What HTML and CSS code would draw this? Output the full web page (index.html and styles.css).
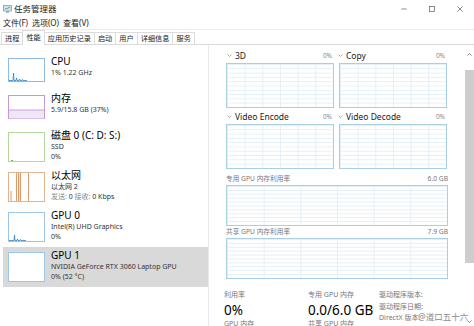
FILE: index.html
```html
<!DOCTYPE html>
<html lang="zh-CN">
<head>
<meta charset="utf-8">
<title>任务管理器</title>
<link rel="stylesheet" href="styles.css">
</head>
<body>
<div class="window">
  <header class="titlebar">
    <svg class="app-icon" viewBox="0 0 9 8" width="9" height="8">
      <rect x="0.5" y="0.5" width="8" height="5.5" fill="#d6e4f1" stroke="#7f9db9" stroke-width="0.8"/>
      <polyline points="1.5,4.5 3,3 4.5,4 6,2 7.5,3" fill="none" stroke="#3a9a3a" stroke-width="0.7"/>
      <rect x="3" y="6.3" width="3" height="1.4" fill="#7f9db9"/>
    </svg>
    <span class="title">任务管理器</span>
    <div class="controls">
      <span class="ctrl"><svg viewBox="0 0 7 7"><path d="M0.5 3.5H6.5" stroke="#555" stroke-width="0.8"/></svg></span>
      <span class="ctrl"><svg viewBox="0 0 7 7"><rect x="0.5" y="0.5" width="6" height="6" fill="none" stroke="#555" stroke-width="0.8"/></svg></span>
      <span class="ctrl"><svg viewBox="0 0 7 7"><path d="M0.5 0.5L6.5 6.5M6.5 0.5L0.5 6.5" stroke="#555" stroke-width="0.8"/></svg></span>
    </div>
  </header>

  <nav class="menubar">
    <span class="menu">文件(F)</span>
    <span class="menu">选项(O)</span>
    <span class="menu">查看(V)</span>
  </nav>

  <div class="tabs">
    <span class="tab">进程</span>
    <span class="tab active">性能</span>
    <span class="tab">应用历史记录</span>
    <span class="tab">启动</span>
    <span class="tab">用户</span>
    <span class="tab">详细信息</span>
    <span class="tab">服务</span>
  </div>

  <main class="main">
    <aside class="sidebar">
      <div class="item two">
        <svg class="thumb" width="37" height="24" viewBox="0 0 37 24">
          <rect x="0.5" y="0.5" width="36" height="23" fill="#fff" stroke="#8ebbdf"/>
          <polyline points="1,22.5 5,22.5 5.5,15 6,22.5 8,22.5 8.5,20 9,22.5 11,22.5 11.5,21 12,22.5 14,22.5 14.5,21.5 15,22.5 19,22.5" fill="none" stroke="#2a7fc0" stroke-width="0.8"/>
        </svg>
        <div class="info">
          <div class="name">CPU</div>
          <div class="sub">1% 1.22 GHz</div>
        </div>
      </div>

      <div class="item two">
        <svg class="thumb" width="37" height="24" viewBox="0 0 37 24">
          <rect x="0.5" y="0.5" width="36" height="23" fill="#fff" stroke="#c49ad4"/>
          <rect x="1" y="15" width="35" height="8.5" fill="#f1e6f5"/>
          <line x1="1" y1="15" x2="36" y2="15" stroke="#c08ad2" stroke-width="0.8"/>
        </svg>
        <div class="info">
          <div class="name">内存</div>
          <div class="sub">5.9/15.8 GB (37%)</div>
        </div>
      </div>

      <div class="item">
        <svg class="thumb" width="37" height="30" viewBox="0 0 37 30">
          <rect x="0.5" y="0.5" width="36" height="29" fill="#fff" stroke="#b4d69a"/>
          <path d="M3 28.5H5" stroke="#4da60c" stroke-width="0.8"/>
        </svg>
        <div class="info">
          <div class="name">磁盘 0 (C: D: S:)</div>
          <div class="sub">SSD</div>
          <div class="sub">0%</div>
        </div>
      </div>

      <div class="item">
        <svg class="thumb" width="37" height="30" viewBox="0 0 37 30">
          <rect x="0.5" y="0.5" width="36" height="29" fill="#fff" stroke="#e2b48e"/>
          <rect x="10" y="1" width="3" height="28" fill="#f7e4d4"/>
          <path d="M3 29V19M8.5 29V1M10.5 29V1M12.5 29V1M20.5 29V1" stroke="#d2844a" stroke-width="0.8"/>
        </svg>
        <div class="info">
          <div class="name">以太网</div>
          <div class="sub">以太网 2</div>
          <div class="sub"><span class="dim">发送:</span> 0 <span class="dim">接收:</span> 0 Kbps</div>
        </div>
      </div>

      <div class="item">
        <svg class="thumb" width="37" height="30" viewBox="0 0 37 30">
          <rect x="0.5" y="0.5" width="36" height="29" fill="#fff" stroke="#9cc6e4"/>
          <polyline points="1,28.5 6,28.5 6.5,23 7,28.5 9,28.5 9.5,27 10,28.5 12,28.5 12.5,27.5 13,28.5 18,28.5" fill="none" stroke="#2a7fc0" stroke-width="0.8"/>
        </svg>
        <div class="info">
          <div class="name">GPU 0</div>
          <div class="sub">Intel(R) UHD Graphics</div>
          <div class="sub">0%</div>
        </div>
      </div>

      <div class="item selected">
        <svg class="thumb" width="37" height="30" viewBox="0 0 37 30">
          <rect x="0.5" y="0.5" width="36" height="29" fill="#fff" stroke="#9cc6e4"/>
        </svg>
        <div class="info">
          <div class="name">GPU 1</div>
          <div class="sub">NVIDIA GeForce RTX 3060 Laptop GPU</div>
          <div class="sub">0% (52 °C)</div>
        </div>
      </div>
    </aside>

    <section class="detail">
      <div class="engines">
        <div class="cell">
          <div class="cell-head">
            <svg class="chev" viewBox="0 0 5 3"><polyline points="0.5,0.5 2.5,2.5 4.5,0.5" fill="none" stroke="#8a8a8a" stroke-width="0.7"/></svg>
            <span class="eng">3D</span><span class="pct">0%</span>
          </div>
          <div class="graph small"></div>
        </div>
        <div class="cell right">
          <div class="cell-head">
            <svg class="chev" viewBox="0 0 5 3"><polyline points="0.5,0.5 2.5,2.5 4.5,0.5" fill="none" stroke="#8a8a8a" stroke-width="0.7"/></svg>
            <span class="eng">Copy</span><span class="pct">0%</span>
          </div>
          <div class="graph small"></div>
        </div>
        <div class="cell">
          <div class="cell-head">
            <svg class="chev" viewBox="0 0 5 3"><polyline points="0.5,0.5 2.5,2.5 4.5,0.5" fill="none" stroke="#8a8a8a" stroke-width="0.7"/></svg>
            <span class="eng">Video Encode</span><span class="pct">0%</span>
          </div>
          <div class="graph small"></div>
        </div>
        <div class="cell right">
          <div class="cell-head">
            <svg class="chev" viewBox="0 0 5 3"><polyline points="0.5,0.5 2.5,2.5 4.5,0.5" fill="none" stroke="#8a8a8a" stroke-width="0.7"/></svg>
            <span class="eng">Video Decode</span><span class="pct">0%</span>
          </div>
          <div class="graph small"></div>
        </div>
      </div>

      <div class="mem-label first"><span>专用 GPU 内存利用率</span><span>6.0 GB</span></div>
      <div class="graph big"></div>
      <div class="mem-label"><span>共享 GPU 内存利用率</span><span>7.9 GB</span></div>
      <div class="graph big"></div>

      <div class="stats">
        <div class="stat-col">
          <div class="lbl">利用率</div>
          <div class="val">0%</div>
          <div class="lbl">GPU 内存</div>
        </div>
        <div class="stat-col c2">
          <div class="lbl">专用 GPU 内存</div>
          <div class="val">0.0/6.0 GB</div>
          <div class="lbl">共享 GPU 内存</div>
        </div>
        <div class="stat-col c3">
          <div class="drv">驱动程序版本:</div>
          <div class="drv">驱动程序日期:</div>
          <div class="drv">DirectX 版本:</div>
        </div>
      </div>
    </section>

    <div class="scrollbar">
      <div class="sb-arrow"><svg viewBox="0 0 5 3" width="5" height="3"><polyline points="0.5,2.5 2.5,0.5 4.5,2.5" fill="none" stroke="#606060" stroke-width="0.8"/></svg></div>
      <div class="sb-thumb"></div>
      <div class="sb-arrow sb-down"><svg viewBox="0 0 5 3" width="5" height="3"><polyline points="0.5,0.5 2.5,2.5 4.5,0.5" fill="none" stroke="#606060" stroke-width="0.8"/></svg></div>
    </div>
  </main>

  <div class="watermark">@道口五十六</div>
</div>
</body>
</html>
```

FILE: styles.css
```css
* { box-sizing: border-box; margin: 0; padding: 0; }
html, body { width: 474px; height: 326px; overflow: hidden; background: #fff; }
body { font-family: "Noto Sans", "Noto Sans CJK SC", sans-serif; color: #1a1a1a; }

.window { position: relative; width: 474px; height: 326px; display: flex; flex-direction: column; }

/* title bar */
.titlebar { height: 17px; flex: none; display: flex; align-items: center; padding-left: 3px; }
.app-icon { width: 9px; height: 8px; margin-right: 2px; flex: none; }
.title { flex: 1; font-size: 8.5px; line-height: 17px; color: #222; }
.controls { display: flex; height: 17px; }
.ctrl { width: 28px; display: flex; align-items: center; justify-content: center; }
.ctrl svg { width: 6px; height: 6px; }

/* menu */
.menubar { height: 13px; flex: none; display: flex; padding-left: 1px; border-bottom: 1px solid #ededed; font-size: 8px; line-height: 12px; color: #222; }
.menu { padding: 0 2px; }

/* tabs */
.tabs { height: 15px; flex: none; display: flex; align-items: flex-end; padding-left: 1px; border-bottom: 1px solid #dadada; }
.tab { height: 12px; padding: 0 3px; border: 1px solid #dcdcdc; border-bottom: none; margin-right: -1px; font-size: 7.2px; line-height: 11px; color: #222; background: #fff; }
.tab.active { height: 15px; margin-bottom: -1px; line-height: 13px; position: relative; z-index: 1; }

/* main */
.main { flex: 1; min-height: 0; display: flex; }

.sidebar { width: 209px; flex: none; border-right: 1px solid #e8e8e8; padding: 8px 0 0 3px; }
.item { display: flex; align-items: flex-start; gap: 6px; padding: 5px 0 5px 5px; }
.item.two { padding-bottom: 8px; }
.item.selected { background: #d9d9d9; }
.thumb { display: block; flex: none; }
.info { margin-top: -3px; white-space: nowrap; }
.name { font-size: 10px; line-height: 13px; color: #000; }
.sub { font-size: 7px; line-height: 10px; color: #333; }
.sub .dim { color: #8a8a8a; }

/* detail */
.detail { width: 256px; flex: none; padding: 4px 0 0 17px; }
.engines { display: grid; grid-template-columns: 108px 108px; column-gap: 5px; row-gap: 2px; }
.cell-head { height: 13px; display: flex; align-items: center; font-size: 8.5px; line-height: 13px; color: #1a1a1a; }
.chev { width: 5px; height: 3px; margin: 0 3px 0 1px; flex: none; }
.eng { flex: 1; white-space: nowrap; }
.pct { font-size: 6.5px; color: #8a8a8a; padding-right: 2px; }
.right .cell-head { margin-left: -2px; }

.graph {
  border: 1px solid #a9cfe6;
  background-color: #fff;
  background-image:
    linear-gradient(to bottom, #e4eff8 1px, transparent 1px),
    linear-gradient(to right, #e4eff8 1px, transparent 1px);
}
.graph.small { height: 45px; margin-top: 1px; background-size: 100% 10%, 16.666% 100%; }
.graph.big { width: 222px; height: 41px; background-size: 100% 10%, 16.666% 100%; }

.mem-label { width: 222px; display: flex; justify-content: space-between; font-size: 6.7px; line-height: 12px; color: #777; }
.mem-label.first { margin-top: 4px; }

.stats { display: flex; margin: 11px 0 0 -2px; }
.stat-col { width: 84px; flex: none; }
.stat-col.c2 { width: 71px; }
.stat-col.c3 { width: auto; flex: 1; }
.lbl { font-size: 7px; line-height: 10px; color: #777; white-space: nowrap; }
.val { font-size: 13.5px; line-height: 18px; color: #000; margin-top: 1px; white-space: nowrap; }
.drv { font-size: 7px; line-height: 11.5px; color: #777; margin-top: -1px; white-space: nowrap; }
.drv + .drv { margin-top: 0; }

/* scrollbar */
.scrollbar { width: 9px; flex: none; display: flex; flex-direction: column; }
.sb-arrow { height: 18px; display: flex; align-items: center; justify-content: center; }
.sb-thumb { height: 193px; margin-top: 7px; background: #cdcdcd; }
.sb-down { margin-top: auto; height: 10px; }

.watermark { position: absolute; left: 418px; top: 311px; font-size: 8.5px; line-height: 11px; color: #8c8c8c; text-shadow: 0 0 1px #fff; white-space: nowrap; }
```
